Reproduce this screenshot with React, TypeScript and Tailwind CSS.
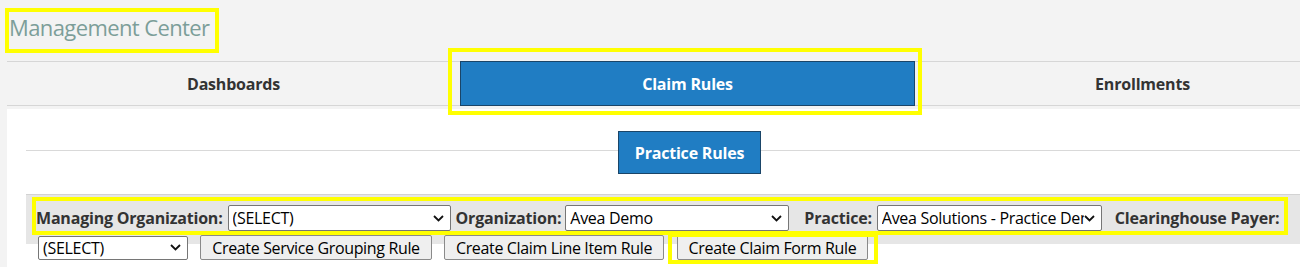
import React from "react";

function Chevron() {
  return (
    <svg width="11" height="7" viewBox="0 0 11 7" className="shrink-0">
      <polyline points="1,1 5.5,5.5 10,1" fill="none" stroke="#111" strokeWidth="1.8" />
    </svg>
  );
}

function FakeSelect({ value, className }: { value: string; className: string }) {
  return (
    <div
      className={`flex items-center bg-white border border-[#767676] rounded-[2px] pl-[4px] pr-[6px] text-[16px] tracking-[-0.3px] text-black font-normal ${className}`}
    >
      <span className="flex-1 min-w-0 overflow-hidden whitespace-nowrap leading-[22px]">{value}</span>
      <Chevron />
    </div>
  );
}

function Btn({ label, className }: { label: string; className: string }) {
  return (
    <button
      className={`h-[25px] bg-[#efefef] border border-[#8a8a8a] rounded-[2px] text-[16px] tracking-[-0.35px] text-black leading-[22px] flex items-center justify-center whitespace-nowrap ${className}`}
    >
      {label}
    </button>
  );
}

export default function App() {
  return (
    <div className="w-full h-[267px] overflow-hidden bg-[#f3f3f3]">
      <div className="w-[1372px] font-['Open_Sans',sans-serif]">
        {/* Title */}
        <div className="pt-[8px] pl-[5px]">
          <div className="w-[214px] border-4 border-[#ffff00] pb-[7px]">
            <h1 className="text-[22px] leading-[30px] tracking-[-0.6px] text-[#7c9e99] font-normal whitespace-nowrap">
              Management Center
            </h1>
          </div>
        </div>

        {/* Tabs */}
        <div className="mt-[8px] ml-[7px] flex h-[45px] border-y border-[#d6d6d6] text-[16px] tracking-[-0.2px] font-bold">
          <div className="w-[453px] flex items-center justify-center text-[#333]">Dashboards</div>
          <div className="relative w-[455px] -my-px">
            <div className="h-full flex items-center justify-center bg-[#207dc3] border border-[#1a4568] text-white">
              Claim Rules
            </div>
            <span className="absolute -left-[12px] -right-[7px] -top-[13px] -bottom-[9px] border-4 border-[#ffff00] pointer-events-none" />
          </div>
          <div className="w-[455px] flex items-center justify-center text-[#333]">Enrollments</div>
        </div>

        {/* Content */}
        <div className="mt-[3px] ml-[7px] bg-white px-[19px] pt-[22px] h-[200px]">
          <div className="flex items-start">
            <div className="flex-1 mt-[19px] border-t border-[#d9d9d9]" />
            <button className="w-[143px] h-[43px] bg-[#207dc3] border border-[#1a4568] text-white text-[16px] tracking-[-0.2px] font-bold">
              Practice Rules
            </button>
            <div className="flex-1 mt-[19px] border-t border-[#d9d9d9]" />
          </div>

          <div className="mt-[20px] h-[50px] bg-[#e6e6e6] border-t border-[#d3d3d3]">
            <div className="mt-[2px] ml-[6px] w-fit flex items-center border-4 border-[#ffff00] pt-[4px] pr-[5px] text-[16px] tracking-[-0.2px] font-bold text-[#333]">
              <span className="whitespace-nowrap">Managing Organization:</span>
              <FakeSelect value="(SELECT)" className="ml-[5px] w-[223px] h-[26px]" />
              <span className="ml-[5px] whitespace-nowrap">Organization:</span>
              <FakeSelect value="Avea Demo" className="ml-[4px] w-[224px] h-[26px]" />
              <span className="ml-[15px] whitespace-nowrap">Practice:</span>
              <FakeSelect value="Avea Solutions - Practice Demo" className="ml-[5px] w-[225px] h-[26px]" />
              <span className="ml-[13px] whitespace-nowrap">Clearinghouse Payer:</span>
            </div>
            <div className="ml-[12px] flex items-center">
              <FakeSelect value="(SELECT)" className="w-[150px] h-[24px]" />
              <Btn label="Create Service Grouping Rule" className="ml-[12px] w-[232px]" />
              <Btn label="Create Claim Line Item Rule" className="ml-[12px] w-[220px]" />
              <div className="relative ml-[13px]">
                <Btn label="Create Claim Form Rule" className="w-[191px]" />
                <span className="absolute -left-[9px] -right-[10px] -top-[2px] -bottom-[4px] border-4 border-[#ffff00] pointer-events-none" />
              </div>
            </div>
          </div>
        </div>
      </div>
    </div>
  );
}
